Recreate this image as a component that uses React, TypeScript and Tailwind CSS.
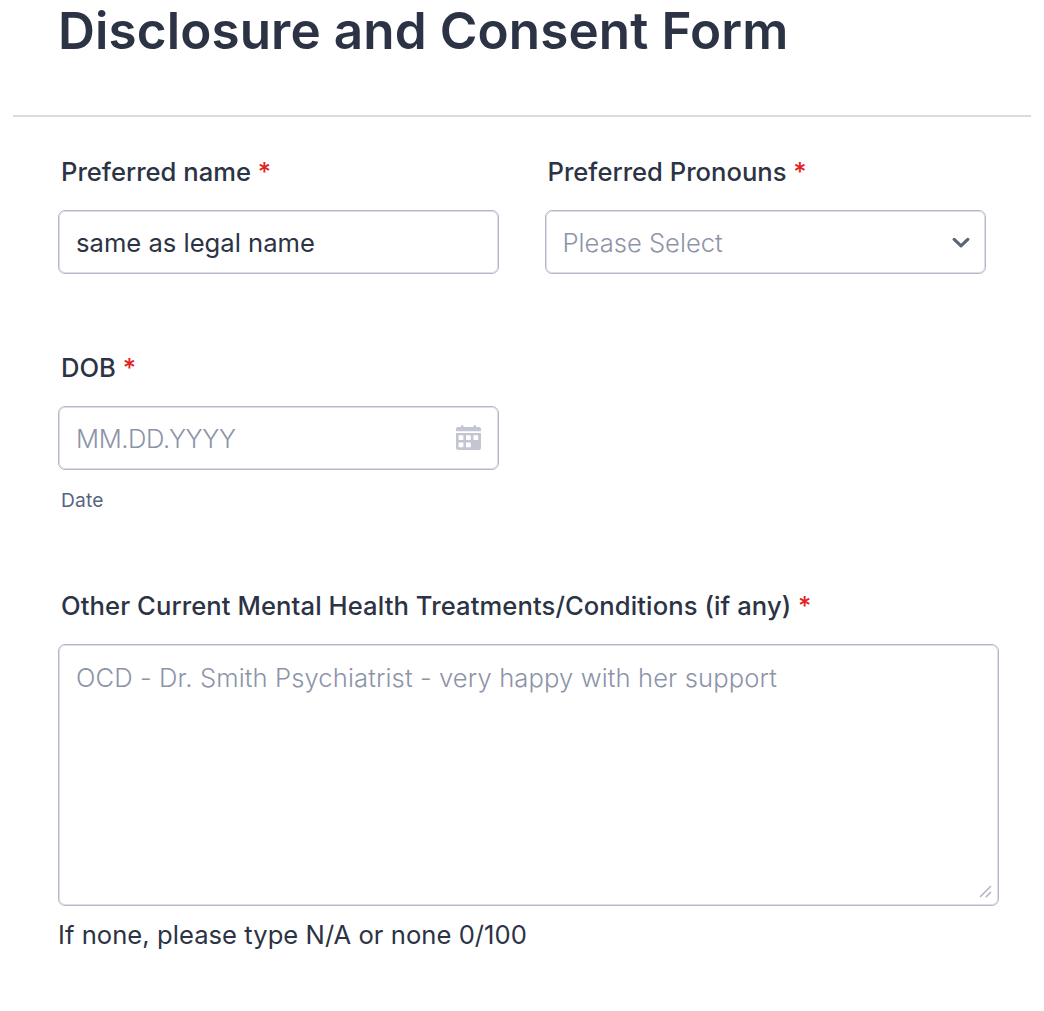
import type { ReactNode } from 'react'

const boxClass =
  'w-full rounded-[7px] border border-[#b2b8c8] bg-white px-[17px] text-[25.6px] text-[#2c3345] shadow-[inset_0_0_0_1px_#dddfe7] outline-none placeholder:font-light placeholder:text-[#8d94a8] placeholder:opacity-100'

export default function App() {
  return (
    <main className="h-[1011px] w-[1044px] overflow-hidden bg-white font-['Inter','Liberation_Sans',sans-serif] text-[#2c3345]">
      {/* Heading */}
      <header className="mx-[13px] h-[117px] border-b-2 border-[#dadae0] pl-[45px]">
        <h1 className="text-[51.2px] leading-[61px] font-semibold tracking-[0.1px] whitespace-nowrap">
          Disclosure and Consent Form
        </h1>
      </header>

      <form className="pt-[39px] pr-[45px] pl-[58px]">
        <div className="flex gap-[45.5px]">
          <div className="w-[441px]">
            <Label htmlFor="name">Preferred name</Label>
            <input id="name" type="text" defaultValue="same as legal name" className={`${boxClass} h-16`} />
          </div>
          <div className="w-[441px]">
            <Label htmlFor="pronouns">Preferred Pronouns</Label>
            <button
              id="pronouns"
              type="button"
              className={`${boxClass} flex h-16 items-center justify-between`}
            >
              <span className="pt-0.5 font-light text-[#8d94a8]">Please Select</span>
              <ChevronIcon />
            </button>
          </div>
        </div>

        <div className="mt-[78px] w-[441px]">
          <Label htmlFor="dob">DOB</Label>
          <div className={`${boxClass} flex h-16 items-center justify-between`}>
            <input
              id="dob"
              type="text"
              placeholder="MM.DD.YYYY"
              className="w-[300px] pt-0.5 tracking-[-0.4px] outline-none placeholder:font-light placeholder:text-[#8d94a8] placeholder:opacity-100"
            />
            <CalendarIcon />
          </div>
          <p className="mt-[18px] ml-[3px] text-[19.2px] leading-6 tracking-[0.2px] text-[#57647e]">Date</p>
        </div>

        <div className="mt-[78px]">
          <Label htmlFor="treatments">
            <span className="tracking-[0.09px]">Other Current Mental Health Treatments/Conditions (if any)</span>
          </Label>
          <div className="relative">
            <textarea
              id="treatments"
              placeholder="OCD - Dr. Smith Psychiatrist - very happy with her support"
              className={`${boxClass} block h-[262px] resize-none pt-[17px] leading-8 tracking-[0.11px]`}
            />
            <ResizeGrip />
          </div>
          <p className="mt-[13px] text-[25.6px] leading-8 tracking-[0.04px]">
            If none, please type N/A or none 0/100
          </p>
        </div>
      </form>
    </main>
  )
}

function Label({ htmlFor, children }: { htmlFor: string; children: ReactNode }) {
  return (
    <label
      htmlFor={htmlFor}
      className="mb-[22px] ml-[3px] block text-[25.6px] leading-8 font-medium whitespace-nowrap"
    >
      {children} <span className="text-[#e02424]">*</span>
    </label>
  )
}

function ChevronIcon() {
  return (
    <svg className="-mr-[2px] mt-0.5" width="18" height="12" viewBox="0 0 18 12" fill="none" stroke="#5b6478" strokeWidth="3.2" strokeLinecap="round" strokeLinejoin="round">
      <path d="M2.2 2.4L9 8.8l6.8-6.4" />
    </svg>
  )
}

function CalendarIcon() {
  return (
    <svg className="mb-0.5" width="25" height="25" viewBox="0 0 25 25" fill="#c3c6d1">
      <path d="M2 2h3V1.3a1 1 0 012.4 0V2h10.2v-.7a1 1 0 012.4 0V2h3a2 2 0 012 2v2.3H0V4a2 2 0 012-2z" />
      <path
        fillRule="evenodd"
        d="M0 8h25v15a2 2 0 01-2 2H2a2 2 0 01-2-2zM2.6 10.3v4.7h4.8v-4.7zm7.4 0v4.7h4.8v-4.7zm7.4 0v4.7h4.8v-4.7zM2.6 17.6v4.7h4.8v-4.7zm7.4 0v4.7h4.8v-4.7z"
      />
    </svg>
  )
}

function ResizeGrip() {
  return (
    <svg className="pointer-events-none absolute right-[7px] bottom-[8px]" width="13" height="13" viewBox="0 0 13 13" fill="none" stroke="#b4b7c3" strokeWidth="1.6" strokeLinecap="round">
      <path d="M1.5 11.5l10-10M7.2 11.7l4.3-4.3" />
    </svg>
  )
}
